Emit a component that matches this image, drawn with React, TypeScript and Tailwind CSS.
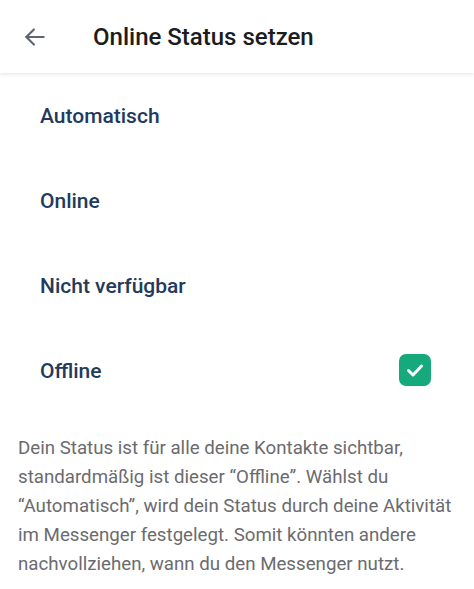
import React from "react";

const options = ["Automatisch", "Online", "Nicht verfügbar", "Offline"];

export default function App() {
  return (
    <div className="w-[474px] h-[589px] bg-white overflow-hidden" style={{ fontFamily: "Roboto, 'Noto Sans', sans-serif" }}>
      <header className="h-[73px] flex items-center bg-white shadow-[0_2px_3px_rgba(0,0,0,0.08)] relative z-10">
        <div className="w-[93px] pl-[22px] flex items-center">
          <svg width="26" height="26" viewBox="0 0 24 24" fill="none" stroke="#5f6470" strokeWidth="2" strokeLinecap="round" strokeLinejoin="round">
            <path d="M20 12H4" />
            <path d="M11 5l-7 7 7 7" />
          </svg>
        </div>
        <h1 className="text-[24px] font-medium text-[#1c1c1e] leading-none pt-[1px]">Online Status setzen</h1>
      </header>
      <div className="pt-[1px]">
        {options.map((o, i) => (
          <div key={o} className="h-[85px] flex items-center justify-between pl-[40px] pr-[43px]">
            <span className="text-[21px] font-medium text-[#233a5c]">{o}</span>
            {i === 3 && (
              <div className="w-[32px] h-[32px] rounded-[7px] bg-[#16a97c] flex items-center justify-center -mt-[3px]">
                <svg width="24" height="24" viewBox="0 0 24 24" fill="none" stroke="white" strokeWidth="3" strokeLinecap="round" strokeLinejoin="round">
                  <path d="M5.5 12.5l4.5 4.5L18.5 8" />
                </svg>
              </div>
            )}
          </div>
        ))}
      </div>
      <p className="px-[18px] pt-[20px] text-[18.7px] leading-[29px] text-[#6b6b6f]">
        Dein Status ist für alle deine Kontakte sichtbar, standardmäßig ist dieser “Offline”. Wählst du “Automatisch”, wird dein Status durch deine Aktivität im Messenger festgelegt. Somit könnten andere nachvollziehen, wann du den Messenger nutzt.
      </p>
    </div>
  );
}
